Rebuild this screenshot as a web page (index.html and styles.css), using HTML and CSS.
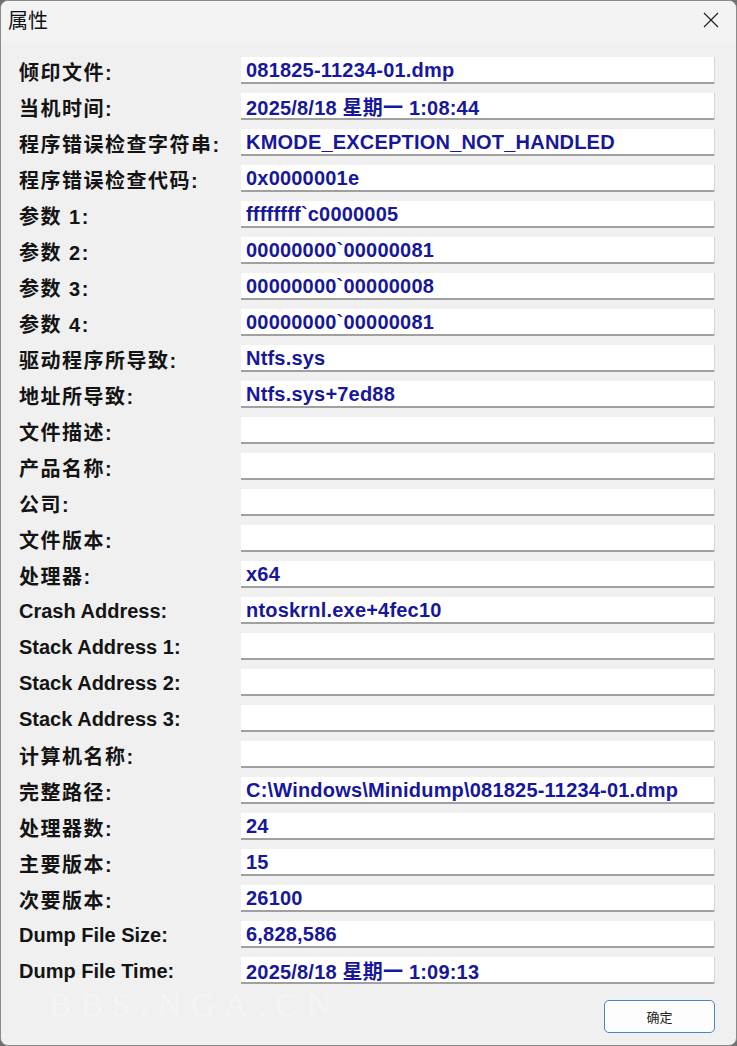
FILE: index.html
```html
<!DOCTYPE html>
<html lang="zh-CN">
<head>
<meta charset="utf-8">
<title>属性</title>
<link rel="stylesheet" href="styles.css">
</head>
<body>
<div class="window">
  <div class="titlebar">
    <span class="title">属性</span>
    <span class="close" aria-label="关闭">
      <svg width="16" height="16" viewBox="0 0 16 16"><path d="M1 1 L15 15 M15 1 L1 15" stroke="#222" stroke-width="1.2" fill="none"/></svg>
    </span>
  </div>
  <div class="props">
    <div class="label cjk">倾印文件:</div><div class="field">081825-11234-01.dmp</div>
    <div class="label cjk">当机时间:</div><div class="field">2025/8/18 星期一 1:08:44</div>
    <div class="label cjk">程序错误检查字符串:</div><div class="field">KMODE_EXCEPTION_NOT_HANDLED</div>
    <div class="label cjk">程序错误检查代码:</div><div class="field">0x0000001e</div>
    <div class="label cjk">参数 1:</div><div class="field">ffffffff`c0000005</div>
    <div class="label cjk">参数 2:</div><div class="field">00000000`00000081</div>
    <div class="label cjk">参数 3:</div><div class="field">00000000`00000008</div>
    <div class="label cjk">参数 4:</div><div class="field">00000000`00000081</div>
    <div class="label cjk">驱动程序所导致:</div><div class="field">Ntfs.sys</div>
    <div class="label cjk">地址所导致:</div><div class="field">Ntfs.sys+7ed88</div>
    <div class="label cjk">文件描述:</div><div class="field"></div>
    <div class="label cjk">产品名称:</div><div class="field"></div>
    <div class="label cjk">公司:</div><div class="field"></div>
    <div class="label cjk">文件版本:</div><div class="field"></div>
    <div class="label cjk">处理器:</div><div class="field">x64</div>
    <div class="label">Crash Address:</div><div class="field">ntoskrnl.exe+4fec10</div>
    <div class="label">Stack Address 1:</div><div class="field"></div>
    <div class="label">Stack Address 2:</div><div class="field"></div>
    <div class="label">Stack Address 3:</div><div class="field"></div>
    <div class="label cjk">计算机名称:</div><div class="field"></div>
    <div class="label cjk">完整路径:</div><div class="field">C:\Windows\Minidump\081825-11234-01.dmp</div>
    <div class="label cjk">处理器数:</div><div class="field">24</div>
    <div class="label cjk">主要版本:</div><div class="field">15</div>
    <div class="label cjk">次要版本:</div><div class="field">26100</div>
    <div class="label">Dump File Size:</div><div class="field">6,828,586</div>
    <div class="label">Dump File Time:</div><div class="field">2025/8/18 星期一 1:09:13</div>
  </div>
  <div class="footer">
    <button class="ok">确定</button>
  </div>
  <div class="watermark">BBS.NGA.CN</div>
</div>
</body>
</html>
```
FILE: styles.css
```css
html, body {
  margin: 0;
  padding: 0;
  background: #6f6f6f;
}
.window {
  position: relative;
  box-sizing: border-box;
  width: 737px;
  height: 1046px;
  background: #f0f0f0;
  border: 1px solid #8a8a8a;
  border-radius: 8px;
  overflow: hidden;
  font-family: "Liberation Sans", "Noto Sans CJK SC", sans-serif;
}
.titlebar {
  height: 40px;
  display: flex;
  align-items: center;
  justify-content: space-between;
  padding: 0 17px 0 7px;
  background: #f3f3f3;
}
.title {
  font-family: "Noto Sans CJK SC", sans-serif;
  font-size: 20px;
  color: #111;
  margin-top: -3px;
}
.close {
  display: flex;
  margin-top: -2px;
}
.props {
  display: grid;
  grid-template-columns: 222px 473px;
  grid-auto-rows: 27px;
  row-gap: 9px;
  padding: 16px 0 0 18px;
}
.label {
  display: flex;
  align-items: center;
  padding-top: 2px;
  font-size: 20px;
  font-weight: bold;
  color: #141414;
  white-space: nowrap;
}
.label.cjk {
  letter-spacing: 1.5px;
}
.field {
  box-sizing: border-box;
  background: #fff;
  border-bottom: 2px solid #a0a0a0;
  box-shadow: 1px 0 0 #d6d6d6;
  padding: 2px 0 0 5px;
  display: flex;
  align-items: center;
  font-size: 20px;
  font-weight: bold;
  letter-spacing: 0.2px;
  color: #17179c;
  white-space: nowrap;
  overflow: hidden;
}
.footer {
  display: flex;
  justify-content: flex-end;
  padding: 16px 21px 0 0;
}
.ok {
  width: 111px;
  height: 33px;
  background: #fdfdfd;
  border: 1.5px solid #4a86c0;
  border-radius: 5px;
  font-family: "Noto Sans CJK SC", sans-serif;
  font-size: 13px;
  color: #222;
  padding: 0;
}
.watermark {
  position: absolute;
  left: 48px;
  top: 986px;
  font-family: "Liberation Serif", serif;
  font-size: 33px;
  letter-spacing: 9.5px;
  color: #f4f4f4;
  pointer-events: none;
}
```
